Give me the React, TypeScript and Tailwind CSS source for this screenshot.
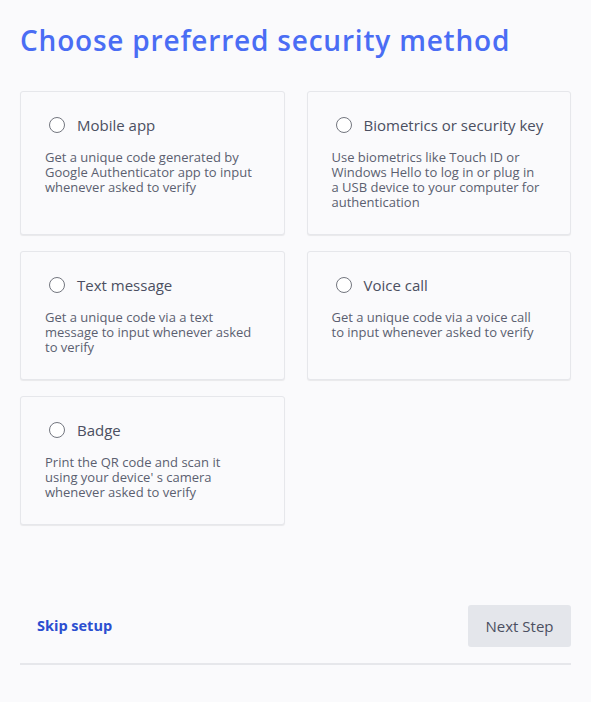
import React from "react";

const options = [
  { label: "Mobile app", desc: "Get a unique code generated by Google Authenticator app to input whenever asked to verify" },
  { label: "Biometrics or security key", desc: "Use biometrics like Touch ID or Windows Hello to log in or plug in a USB device to your computer for authentication" },
  { label: "Text message", desc: "Get a unique code via a text message to input whenever asked to verify" },
  { label: "Voice call", desc: "Get a unique code via a voice call to input whenever asked to verify" },
  { label: "Badge", desc: "Print the QR code and scan it using your device' s camera whenever asked to verify" },
];

function Card({ label, desc }: { label: string; desc: string }) {
  return (
    <div className="rounded-[3px] border border-[#e6e7eb] bg-[#fafafc] pl-[24px] pr-[28.5px] pt-[23px] pb-[24px] shadow-[0_1px_1px_rgba(0,0,0,0.07)]">
      <div className="flex h-[20px] items-center pl-[4px]">
        <span className="h-[16px] w-[16px] shrink-0 rounded-full border-[1.5px] border-[#73767f] bg-white" />
        <span className="ml-[12px] whitespace-nowrap text-[15px] leading-[20px] text-[#4b4f61]">{label}</span>
      </div>
      <p className="mt-[15px] text-[13px] leading-[15px] text-[#5b5f70]">{desc}</p>
    </div>
  );
}

export default function App() {
  return (
    <div className="min-h-[702px] bg-[#fafafc] px-[20px] pt-[20px] pb-[38px]" style={{ fontFamily: "'Open Sans', sans-serif" }}>
      <h1 className="text-[28px] font-semibold leading-[40px] tracking-[0.8px] text-[#4a6df4]">Choose preferred security method</h1>
      <div className="mt-[31px] grid grid-cols-2 gap-x-[22px] gap-y-[16px] items-stretch">
        {options.map((o) => (
          <Card key={o.label} label={o.label} desc={o.desc} />
        ))}
      </div>
      <div className="mt-[80px] flex items-center justify-between">
        <button className="pl-[17px] text-[14.5px] font-bold text-[#2b4ed0]">Skip setup</button>
        <button className="h-[42px] w-[103px] rounded-[3px] bg-[#e4e6eb] text-[15px] text-[#4b4f61]">Next Step</button>
      </div>
      <div className="mt-[16px] h-[2px] bg-[#e6e7eb]" />
    </div>
  );
}
